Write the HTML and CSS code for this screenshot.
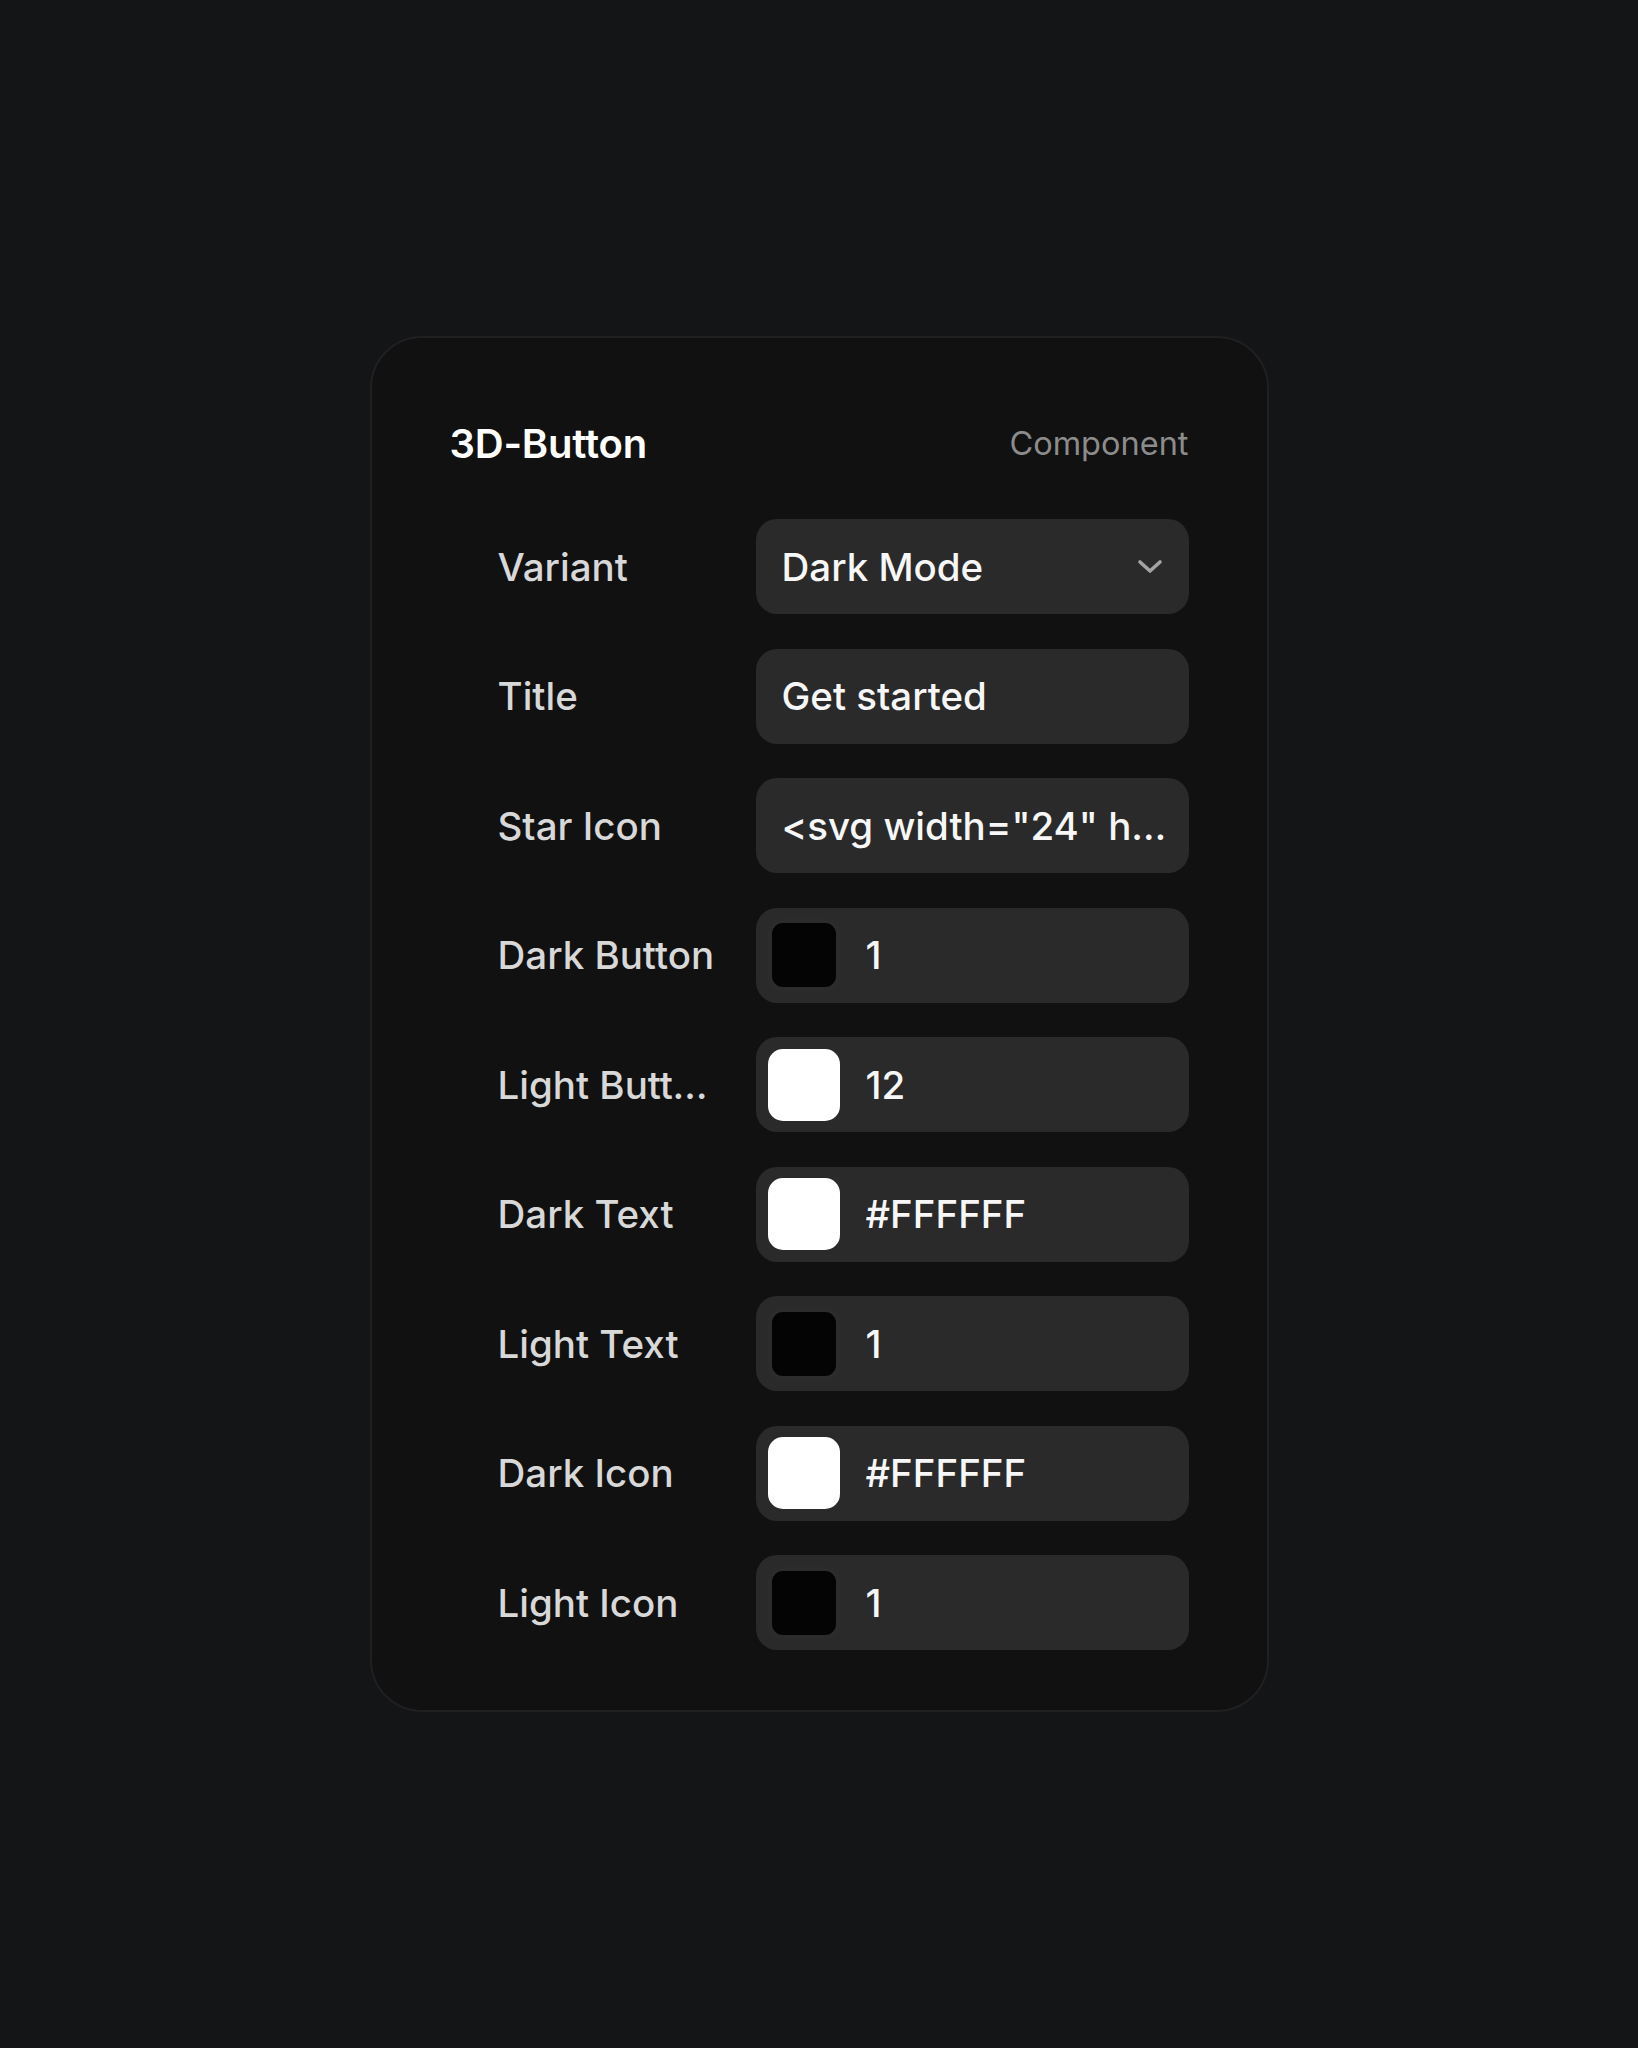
FILE: index.html
```html
<!DOCTYPE html>
<html lang="en">
<head>
<meta charset="utf-8">
<title>3D-Button</title>
<link rel="stylesheet" href="styles.css">
</head>
<body>
<main class="stage">
  <section class="card">
    <header class="card-head">
      <h1 class="card-title">3D-Button</h1>
      <span class="card-kind">Component</span>
    </header>
    <div class="props">
      <div class="prop">
        <span class="prop-label">Variant</span>
        <div class="field field-select">
          <span class="field-text">Dark Mode</span>
          <svg class="chevron" width="26" height="15" viewBox="0 0 26 15" aria-hidden="true"><path d="M3 3 L13 12 L23 3" fill="none" stroke="#a3a3a3" stroke-width="3.6" stroke-linecap="round" stroke-linejoin="round"/></svg>
        </div>
      </div>
      <div class="prop">
        <span class="prop-label">Title</span>
        <div class="field"><span class="field-text">Get started</span></div>
      </div>
      <div class="prop">
        <span class="prop-label">Star Icon</span>
        <div class="field field-code"><span class="field-text">&lt;svg width="24" height="24" viewBox="0 0 24 24"&gt;</span></div>
      </div>
      <div class="prop">
        <span class="prop-label">Dark Button</span>
        <div class="field field-color"><span class="swatch swatch-dark"></span><span class="field-text">1</span></div>
      </div>
      <div class="prop">
        <span class="prop-label">Light Button</span>
        <div class="field field-color"><span class="swatch swatch-light"></span><span class="field-text">12</span></div>
      </div>
      <div class="prop">
        <span class="prop-label">Dark Text</span>
        <div class="field field-color"><span class="swatch swatch-light"></span><span class="field-text">#FFFFFF</span></div>
      </div>
      <div class="prop">
        <span class="prop-label">Light Text</span>
        <div class="field field-color"><span class="swatch swatch-dark"></span><span class="field-text">1</span></div>
      </div>
      <div class="prop">
        <span class="prop-label">Dark Icon</span>
        <div class="field field-color"><span class="swatch swatch-light"></span><span class="field-text">#FFFFFF</span></div>
      </div>
      <div class="prop">
        <span class="prop-label">Light Icon</span>
        <div class="field field-color"><span class="swatch swatch-dark"></span><span class="field-text">1</span></div>
      </div>
    </div>
  </section>
</main>
</body>
</html>
```
FILE: styles.css
```css
* { box-sizing: border-box; }

html, body {
  margin: 0;
  padding: 0;
  background: #141517;
}

body {
  font-family: Inter, "Noto Sans", "Liberation Sans", sans-serif;
  color: #f2f2f2;
}

.stage {
  width: 100%;
  height: 2048px;
  display: flex;
  align-items: center;
  justify-content: center;
}

.card {
  width: 899px;
  background: #111112;
  border: 2px solid #202023;
  border-radius: 52px;
  padding: 84px 78px 60px 78px;
  display: flex;
  flex-direction: column;
}

.card-head {
  height: 44px;
  display: flex;
  align-items: center;
  justify-content: space-between;
}

.card-title {
  margin: 0;
  font-size: 40px;
  font-weight: 600;
  line-height: 44px;
  color: #ffffff;
  letter-spacing: -0.2px;
}

.card-kind {
  font-size: 32.5px;
  font-weight: 400;
  color: #8c8c8c;
  line-height: 44px;
}

.props {
  margin-top: 53px;
  display: flex;
  flex-direction: column;
  gap: 34.5px;
  padding-left: 48px;
}

.prop {
  display: flex;
  align-items: center;
  gap: 39px;
  height: 95px;
}

.prop-label {
  width: 219px;
  flex: none;
  font-size: 38.5px;
  font-weight: 500;
  color: #d8d8d8;
  white-space: nowrap;
  overflow: hidden;
  text-overflow: ellipsis;
}

.field {
  flex: 1;
  min-width: 0;
  height: 95px;
  background: #2a2a2a;
  border-radius: 21px;
  padding: 0 26px;
  display: flex;
  align-items: center;
  gap: 26px;
}

.field-text {
  flex: 1;
  min-width: 0;
  font-size: 38.5px;
  font-weight: 500;
  color: #f7f7f7;
  white-space: nowrap;
  overflow: hidden;
  text-overflow: ellipsis;
}

.field-code {
  padding-right: 18px;
}

.field-select .chevron {
  flex: none;
}

.field-color {
  padding-left: 12px;
}

.swatch {
  flex: none;
  width: 72px;
  height: 72px;
  border-radius: 15px;
  border: 4px solid rgba(255, 255, 255, 0.16);
}

.swatch-dark { background: #040404; }
.swatch-light { background: #ffffff; }
```
